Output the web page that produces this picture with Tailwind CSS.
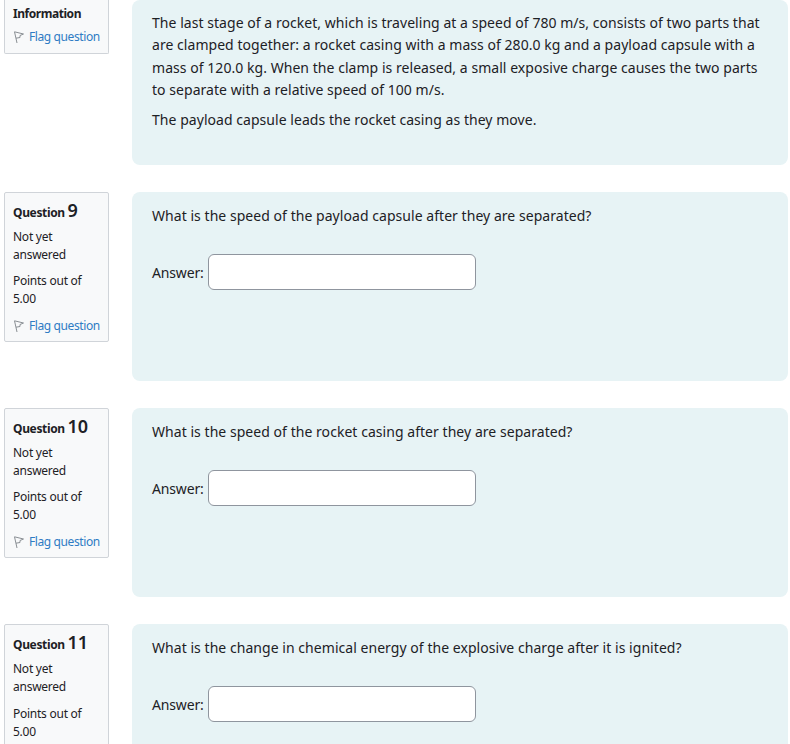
<!DOCTYPE html>
<html><head><meta charset="utf-8"><script src="https://cdn.jsdelivr.net/npm/@tailwindcss/browser@4"></script></head>
<body class="bg-white overflow-hidden h-[744px] font-['Noto_Sans',sans-serif] text-[#1d2125]">
<div class="flex flex-col gap-[27px] pl-1 pr-0.5 h-[744px] overflow-hidden">
 <div class="flex gap-[23px] h-[165px] shrink-0">
  <div class="w-[105px] h-[54px] bg-[#f8f9fa] border border-t-0 border-[#d0d4d9] rounded-b-[2px] px-2 pt-[5px] text-[12px] leading-[18px]">
   <div class="font-bold tracking-[-0.45px]">Information</div>
   <div class="flex items-center gap-1 mt-[5px] text-[#2f7cc4] whitespace-nowrap tracking-[-0.4px]"><svg class="w-3 h-3 shrink-0" viewBox="0 0 12 12" fill="none" stroke="#8a8f94" stroke-width="1"><path d="M4 12 L1.5 0.8 L10.5 3 L7 4.5 L7 6.5 L3 7.2"/></svg>Flag question</div>
  </div>
  <div class="flex-1 bg-[#e7f3f5] rounded-lg px-5 pt-[11.5px] text-[14px] leading-[22.5px] tracking-[0.045px]">
   <p class="whitespace-nowrap">The last stage of a rocket, which is traveling at a speed of 780 m/s, consists of two parts that<br>are clamped together: a rocket casing with a mass of 280.0 kg and a payload capsule with a<br>mass of 120.0 kg. When the clamp is released, a small exposive charge causes the two parts<br>to separate with a relative speed of 100 m/s.</p>
   <p class="mt-[7.5px]">The payload capsule leads the rocket casing as they move.</p>
  </div>
 </div>

 <div class="flex gap-[23px] h-[189px] shrink-0">
  <div class="w-[105px] h-[150px] bg-[#f8f9fa] border border-[#d0d4d9] rounded-[2px] px-2 pt-[5px] text-[12px] leading-[18px] tracking-[-0.25px]">
   <div class="font-bold leading-[24px] tracking-[-0.35px]">Question <span class="text-[18px] font-semibold tracking-normal">9</span></div>
   <div class="mt-[3px]">Not yet answered</div>
   <div class="mt-2">Points out of 5.00</div>
   <div class="flex items-center gap-1 mt-[9px] text-[#2f7cc4] whitespace-nowrap tracking-[-0.4px]"><svg class="w-3 h-3 shrink-0" viewBox="0 0 12 12" fill="none" stroke="#8a8f94" stroke-width="1"><path d="M4 12 L1.5 0.8 L10.5 3 L7 4.5 L7 6.5 L3 7.2"/></svg>Flag question</div>
  </div>
  <div class="flex-1 bg-[#e7f3f5] rounded-lg px-5 pt-[13px] text-[14px] leading-[22.5px] tracking-[0.045px]">
   <p>What is the speed of the payload capsule after they are separated?</p>
   <div class="flex items-center gap-1 mt-[26px]"><span class="mt-[3px] tracking-[-0.15px]">Answer:</span><input class="w-[268px] h-9 bg-white border border-[#8f959e] rounded-md" type="text"></div>
  </div>
 </div>

 <div class="flex gap-[23px] h-[189px] shrink-0">
  <div class="w-[105px] h-[150px] bg-[#f8f9fa] border border-[#d0d4d9] rounded-[2px] px-2 pt-[5px] text-[12px] leading-[18px] tracking-[-0.25px]">
   <div class="font-bold leading-[24px] tracking-[-0.35px]">Question <span class="text-[18px] font-semibold tracking-normal">10</span></div>
   <div class="mt-[3px]">Not yet answered</div>
   <div class="mt-2">Points out of 5.00</div>
   <div class="flex items-center gap-1 mt-[9px] text-[#2f7cc4] whitespace-nowrap tracking-[-0.4px]"><svg class="w-3 h-3 shrink-0" viewBox="0 0 12 12" fill="none" stroke="#8a8f94" stroke-width="1"><path d="M4 12 L1.5 0.8 L10.5 3 L7 4.5 L7 6.5 L3 7.2"/></svg>Flag question</div>
  </div>
  <div class="flex-1 bg-[#e7f3f5] rounded-lg px-5 pt-[13px] text-[14px] leading-[22.5px] tracking-[0.045px]">
   <p>What is the speed of the rocket casing after they are separated?</p>
   <div class="flex items-center gap-1 mt-[26px]"><span class="mt-[3px] tracking-[-0.15px]">Answer:</span><input class="w-[268px] h-9 bg-white border border-[#8f959e] rounded-md" type="text"></div>
  </div>
 </div>

 <div class="flex gap-[23px] h-[189px] shrink-0">
  <div class="w-[105px] h-[150px] bg-[#f8f9fa] border border-[#d0d4d9] rounded-[2px] px-2 pt-[5px] text-[12px] leading-[18px] tracking-[-0.25px]">
   <div class="font-bold leading-[24px] tracking-[-0.35px]">Question <span class="text-[18px] font-semibold tracking-normal">11</span></div>
   <div class="mt-[3px]">Not yet answered</div>
   <div class="mt-[9px]">Points out of 5.00</div>
  </div>
  <div class="flex-1 bg-[#e7f3f5] rounded-lg px-5 pt-[13px] text-[14px] leading-[22.5px] tracking-[0.045px]">
   <p>What is the change in chemical energy of the explosive charge after it is ignited?</p>
   <div class="flex items-center gap-1 mt-[26px]"><span class="mt-[3px] tracking-[-0.15px]">Answer:</span><input class="w-[268px] h-9 bg-white border border-[#8f959e] rounded-md" type="text"></div>
  </div>
 </div>
</div>
</body></html>
